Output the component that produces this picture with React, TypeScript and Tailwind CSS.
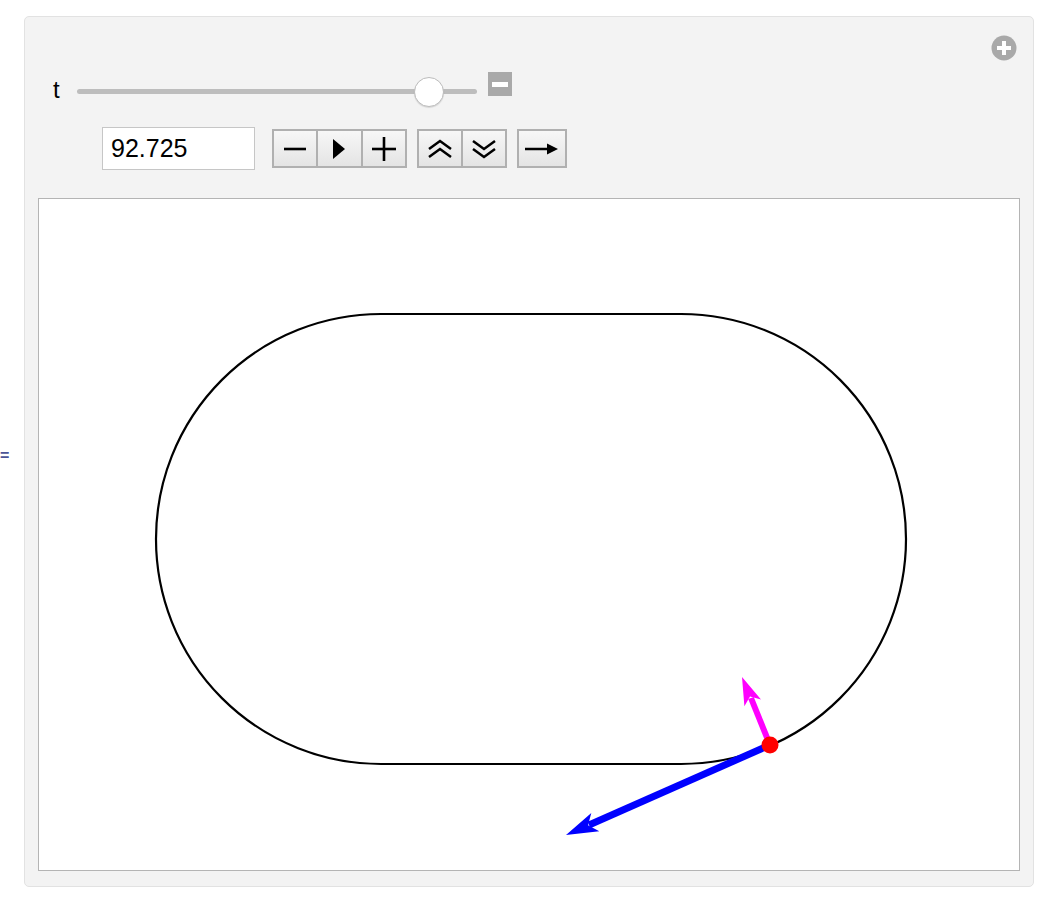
import React from "react";

// Mathematica-like Manipulate panel: slider, animator controls and a stadium plot

const font = { fontFamily: '"Liberation Sans", Arial, sans-serif' };

function Btn({ children, first = false }: { children: React.ReactNode; first?: boolean }) {
  return (
    <div
      className={`h-full flex-1 flex items-center justify-center bg-linear-to-b from-[#f7f7f7] to-[#e4e4e4] ${
        first ? "" : "border-l-2 border-[#b0b0b0]"
      }`}
    >
      {children}
    </div>
  );
}

function MinusIcon() {
  return (
    <svg width="22" height="22" viewBox="0 0 22 22">
      <line x1="0" y1="11" x2="22" y2="11" stroke="black" strokeWidth="2.6" />
    </svg>
  );
}

function PlayIcon() {
  return (
    <svg width="14" height="22" viewBox="0 0 14 22">
      <polygon points="1,1 13,11 1,21" fill="black" />
    </svg>
  );
}

function PlusIcon() {
  return (
    <svg width="24" height="24" viewBox="0 0 24 24">
      <line x1="0" y1="12" x2="24" y2="12" stroke="black" strokeWidth="2.6" />
      <line x1="12" y1="0" x2="12" y2="24" stroke="black" strokeWidth="2.6" />
    </svg>
  );
}

function ChevronsUp() {
  return (
    <svg width="26" height="20" viewBox="0 0 26 20">
      <polyline points="2,10 13,2 24,10" fill="none" stroke="black" strokeWidth="2.5" />
      <polyline points="2,18 13,10 24,18" fill="none" stroke="black" strokeWidth="2.5" />
    </svg>
  );
}

function ChevronsDown() {
  return (
    <svg width="26" height="20" viewBox="0 0 26 20">
      <polyline points="2,2 13,10 24,2" fill="none" stroke="black" strokeWidth="2.5" />
      <polyline points="2,10 13,18 24,10" fill="none" stroke="black" strokeWidth="2.5" />
    </svg>
  );
}

function ArrowRight() {
  return (
    <svg width="34" height="14" viewBox="0 0 34 14">
      <line x1="0" y1="7" x2="24" y2="7" stroke="black" strokeWidth="2.5" />
      <polygon points="22,1.5 33,7 22,12.5" fill="black" />
    </svg>
  );
}

function Plot() {
  // svg coords = page coords minus (39, 199)
  const stadium = "M342,115 L642,115 A225,225 0 0 1 642,565 L342,565 A225,225 0 0 1 342,115 Z";
  return (
    <div className="h-[673px] border border-[#b4b4b4] bg-white">
      <svg width="979" height="671" viewBox="0 0 979 671" className="block">
        <path d={stadium} fill="none" stroke="black" strokeWidth="2.2" />
        {/* tangent (blue) */}
        <line x1="731" y1="546" x2="550" y2="626" stroke="#0000ff" strokeWidth="7" />
        <polygon points="527,636 560.3,632.2 549,626.3 552.3,614" fill="#0000ff" />
        {/* normal (magenta) */}
        <line x1="731" y1="546" x2="712" y2="499" stroke="#ff00ff" strokeWidth="6" />
        <polygon points="703,478 722,500.5 711,497.4 705.4,507.3" fill="#ff00ff" />
        <circle cx="731" cy="546" r="8.5" fill="#ff0000" />
      </svg>
    </div>
  );
}

export default function App() {
  return (
    <div className="w-[1060px] h-[918px] bg-white pt-[16px] flex" style={font}>
      {/* output label */}
      <div className="w-[24px] flex items-center">
        <span className="-mt-[22px] text-[16px] font-bold text-[#4b5496]">=</span>
      </div>

      <div className="relative w-[1010px] h-[871px] rounded-[5px] border border-[#e2e2e2] bg-[#f3f3f3] px-[13px] pt-[59px] pb-[15px]">
        {/* add / expand */}
        <svg width="26" height="26" viewBox="0 0 26 26" className="absolute right-[16px] top-[18px]">
          <circle cx="13" cy="13" r="12.5" fill="#a9a9a9" />
          <rect x="6" y="11" width="14" height="4" fill="white" />
          <rect x="11" y="6" width="4" height="14" fill="white" />
        </svg>

        {/* slider row */}
        <div className="h-[30px] flex items-center">
          <span className="w-[39px] pl-[15px] -mt-[2px] text-[24px] leading-none text-black">t</span>
          <div className="relative w-[400px] h-[5px] rounded-full bg-[#bdbdbd]">
            <div className="absolute left-[337px] -top-[12px] w-[30px] h-[30px] rounded-full bg-white border border-[#bcbcbc] shadow-[0_1px_1px_rgba(0,0,0,0.12)]" />
          </div>
          <div className="ml-[11px] self-start -mt-[4px] w-[24px] h-[24px] bg-[#a9a9a9] flex items-center justify-center">
            <div className="w-[16px] h-[5px] bg-white" />
          </div>
        </div>

        {/* animator row */}
        <div className="mt-[21px] h-[43px] flex items-center pl-[64px]">
          <div className="w-[153px] h-[43px] bg-white border border-[#c6c6c6] flex items-center px-[8px] text-[25px] text-black">
            92.725
          </div>
          <div className="ml-[17px] w-[135px] h-[39px] flex border-2 border-[#b0b0b0]">
            <Btn first>
              <MinusIcon />
            </Btn>
            <Btn>
              <PlayIcon />
            </Btn>
            <Btn>
              <PlusIcon />
            </Btn>
          </div>
          <div className="ml-[10px] w-[90px] h-[39px] flex border-2 border-[#b0b0b0]">
            <Btn first>
              <ChevronsUp />
            </Btn>
            <Btn>
              <ChevronsDown />
            </Btn>
          </div>
          <div className="ml-[10px] w-[50px] h-[39px] flex border-2 border-[#b0b0b0]">
            <Btn first>
              <ArrowRight />
            </Btn>
          </div>
        </div>

        <div className="mt-[28px]">
          <Plot />
        </div>
      </div>
    </div>
  );
}
